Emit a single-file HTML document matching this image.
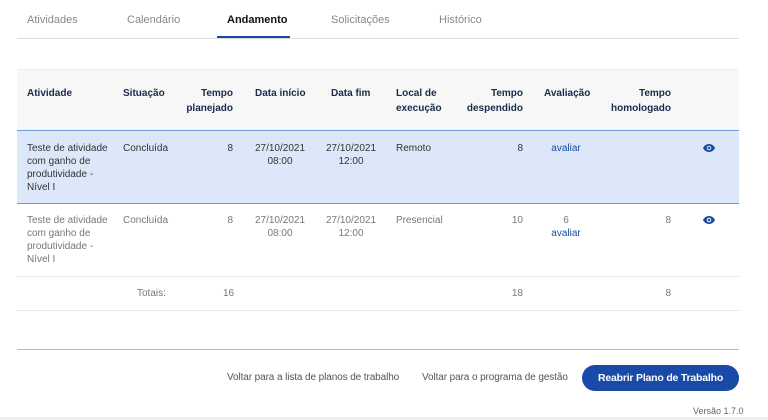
<!DOCTYPE html>
<html><head><meta charset="utf-8"><style>
*{margin:0;padding:0;box-sizing:border-box}
body{width:768px;height:420px;background:#fff;font-family:"Liberation Sans",Arial,sans-serif;position:relative;overflow:hidden;color:#333}
.a{position:absolute;white-space:nowrap}
.tab{top:14px;font-size:11px;color:#888}
.h{font-size:10px;font-weight:bold;color:#1a2a4a;line-height:15px}
.c{font-size:10px;line-height:13px}
.r1{color:#333}
.r2{color:#777}
.r{text-align:right}
.ctr{text-align:center}
.lnk{color:#1a4aa0}
.eye{width:12px;height:8px}
</style></head><body>
<div class="a tab" style="left:27px">Atividades</div>
<div class="a tab" style="left:127px">Calendário</div>
<div class="a tab" style="left:227px;color:#111;font-weight:bold">Andamento</div>
<div class="a tab" style="left:331px">Solicitações</div>
<div class="a tab" style="left:439px">Histórico</div>
<div class="a" style="left:17px;top:38px;width:722px;height:1px;background:#ddd"></div>
<div class="a" style="left:217px;top:36px;width:73px;height:2px;background:#1a4aa0"></div>

<div class="a" style="left:17px;top:69px;width:722px;height:61px;background:#f7f7f7;border-top:1px solid #eee"></div>
<div class="a h" style="left:27px;top:86px">Atividade</div>
<div class="a h" style="left:123px;top:86px">Situação</div>
<div class="a h r" style="left:183px;top:86px;width:50px">Tempo<br>planejado</div>
<div class="a h" style="left:255px;top:86px">Data início</div>
<div class="a h" style="left:331px;top:86px">Data fim</div>
<div class="a h" style="left:396px;top:86px">Local de<br>execução</div>
<div class="a h r" style="left:463px;top:86px;width:60px">Tempo<br>despendido</div>
<div class="a h" style="left:544px;top:86px">Avaliação</div>
<div class="a h r" style="left:601px;top:86px;width:70px">Tempo<br>homologado</div>

<div class="a" style="left:17px;top:130px;width:722px;height:74px;background:#dce8fa;border-top:1px solid #6e9be0;border-bottom:1px solid #6e9be0"></div>
<div class="a c r1" style="left:27px;top:142px">Teste de atividade<br>com ganho de<br>produtividade -<br>Nível I</div>
<div class="a c r1" style="left:123px;top:142px">Concluída</div>
<div class="a c r1 r" style="left:203px;top:142px;width:30px">8</div>
<div class="a c r1 ctr" style="left:245px;top:142px;width:70px">27/10/2021<br>08:00</div>
<div class="a c r1 ctr" style="left:316px;top:142px;width:70px">27/10/2021<br>12:00</div>
<div class="a c r1" style="left:396px;top:142px">Remoto</div>
<div class="a c r1 r" style="left:493px;top:142px;width:30px">8</div>
<div class="a c lnk ctr" style="left:536px;top:142px;width:60px">avaliar</div>
<svg class="a eye" style="left:703px;top:144px" viewBox="0 0 24 16"><path d="M12 0C6 0 2 4 0 8c2 4 6 8 12 8s10-4 12-8C22 4 18 0 12 0z" fill="#1a4aa0"/><circle cx="12" cy="8" r="4.5" fill="#dce8fa"/><circle cx="12" cy="8" r="2.5" fill="#1a4aa0"/></svg>

<div class="a c r2" style="left:27px;top:214px">Teste de atividade<br>com ganho de<br>produtividade -<br>Nível I</div>
<div class="a c r2" style="left:123px;top:214px">Concluída</div>
<div class="a c r2 r" style="left:203px;top:214px;width:30px">8</div>
<div class="a c r2 ctr" style="left:245px;top:214px;width:70px">27/10/2021<br>08:00</div>
<div class="a c r2 ctr" style="left:316px;top:214px;width:70px">27/10/2021<br>12:00</div>
<div class="a c r2" style="left:396px;top:214px">Presencial</div>
<div class="a c r2 r" style="left:493px;top:214px;width:30px">10</div>
<div class="a c ctr" style="left:536px;top:214px;width:60px"><span class="r2">6</span><br><span class="lnk">avaliar</span></div>
<div class="a c r2 r" style="left:641px;top:214px;width:30px">8</div>
<svg class="a eye" style="left:703px;top:216px" viewBox="0 0 24 16"><path d="M12 0C6 0 2 4 0 8c2 4 6 8 12 8s10-4 12-8C22 4 18 0 12 0z" fill="#1a4aa0"/><circle cx="12" cy="8" r="4.5" fill="#fff"/><circle cx="12" cy="8" r="2.5" fill="#1a4aa0"/></svg>

<div class="a" style="left:17px;top:276px;width:722px;height:1px;background:#e6e6e6"></div>
<div class="a c r2" style="left:137px;top:287px">Totais:</div>
<div class="a c r2" style="left:223px;top:287px">16</div>
<div class="a c r2 r" style="left:493px;top:287px;width:30px">18</div>
<div class="a c r2 r" style="left:641px;top:287px;width:30px">8</div>
<div class="a" style="left:17px;top:310px;width:722px;height:1px;background:#e6e6e6"></div>

<div class="a" style="left:17px;top:349px;width:722px;height:1px;background:#bbb"></div>
<div class="a" style="left:227px;top:372px;font-size:10px;letter-spacing:-0.1px;color:#555">Voltar para a lista de planos de trabalho</div>
<div class="a" style="left:422px;top:372px;font-size:10px;letter-spacing:-0.1px;color:#555">Voltar para o programa de gestão</div>
<div class="a" style="left:582px;top:365px;width:157px;height:26px;border-radius:13px;background:#1a4aa8;color:#fff;font-size:10.5px;font-weight:bold;text-align:center;line-height:26px;letter-spacing:-0.2px">Reabrir Plano de Trabalho</div>
<div class="a" style="left:693px;top:406px;font-size:9px;color:#666">Versão 1.7.0</div>
<div class="a" style="left:0;top:417px;width:768px;height:3px;background:#eee"></div>
</body></html>
